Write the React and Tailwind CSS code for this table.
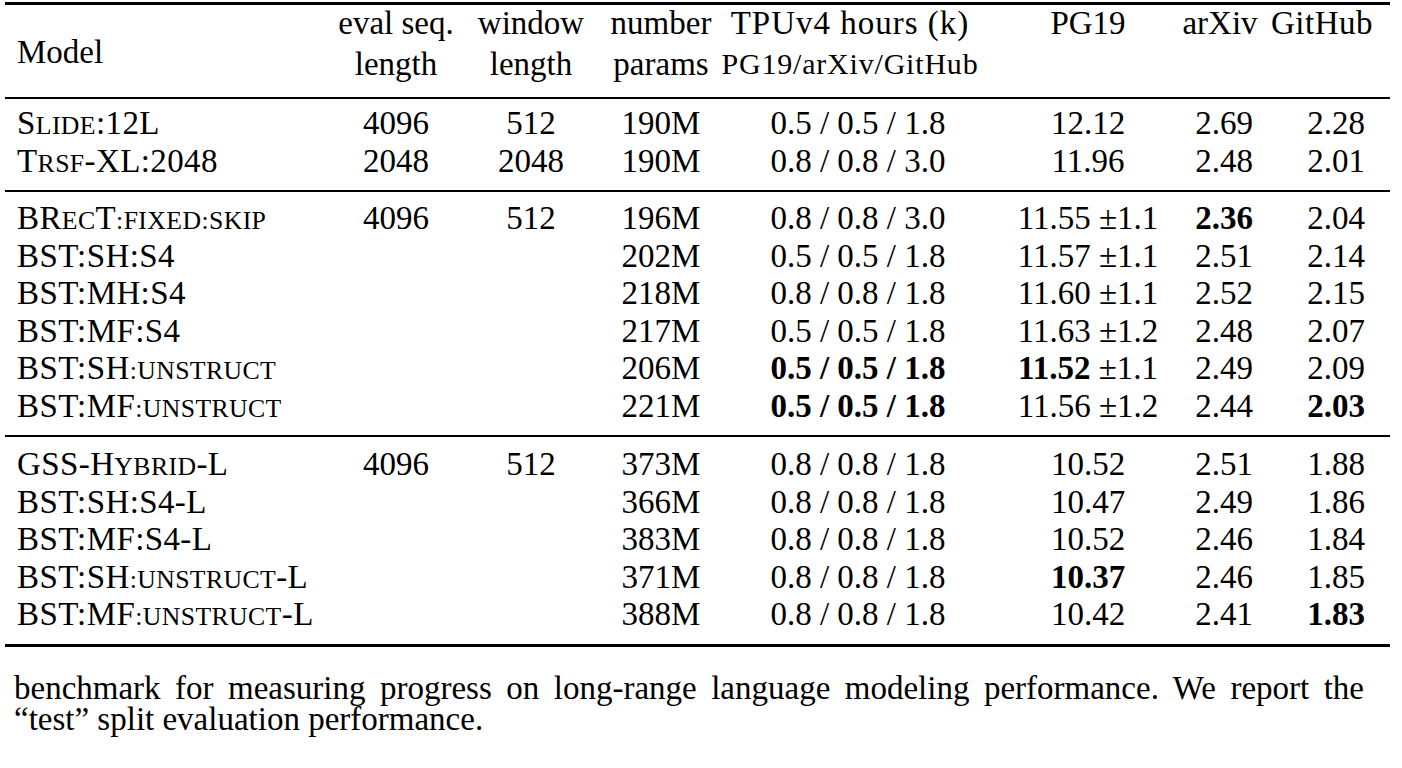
const cols = [
  "w-[132px]", // eval seq. length
  "w-[138px]", // window length
  "w-[122px]", // number params
  "w-[272px]", // TPUv4 hours
  "w-[188px]", // PG19
  "w-[84px]", // arXiv
  "w-[140px]", // GitHub
];

function Sc({ children }) {
  return <span className="text-[0.78em] uppercase">{children}</span>;
}

function B({ children }) {
  return <span className="font-bold">{children}</span>;
}

const tpuBold = <B>0.5 / 0.5 / 1.8</B>;

const groups = [
  {
    pt: "pt-[6px]",
    rows: [
      [<>S<Sc>lide</Sc>:12L</>, "4096", "512", "190M", "0.5 / 0.5 / 1.8", "12.12", "2.69", "2.28"],
      [<>T<Sc>rsf</Sc>-XL:2048</>, "2048", "2048", "190M", "0.8 / 0.8 / 3.0", "11.96", "2.48", "2.01"],
    ],
  },
  {
    pt: "pt-[8px]",
    rows: [
      [<>BR<Sc>ec</Sc>T<Sc>:fixed:skip</Sc></>, "4096", "512", "196M", "0.8 / 0.8 / 3.0", "11.55 ±1.1", <B>2.36</B>, "2.04"],
      ["BST:SH:S4", "", "", "202M", "0.5 / 0.5 / 1.8", "11.57 ±1.1", "2.51", "2.14"],
      ["BST:MH:S4", "", "", "218M", "0.8 / 0.8 / 1.8", "11.60 ±1.1", "2.52", "2.15"],
      ["BST:MF:S4", "", "", "217M", "0.5 / 0.5 / 1.8", "11.63 ±1.2", "2.48", "2.07"],
      [<>BST:SH<Sc>:unstruct</Sc></>, "", "", "206M", tpuBold, <><B>11.52</B>&nbsp;±1.1</>, "2.49", "2.09"],
      [<>BST:MF<Sc>:unstruct</Sc></>, "", "", "221M", tpuBold, "11.56 ±1.2", "2.44", <B>2.03</B>],
    ],
  },
  {
    pt: "pt-[9px]",
    rows: [
      [<>GSS-H<Sc>ybrid</Sc>-L</>, "4096", "512", "373M", "0.8 / 0.8 / 1.8", "10.52", "2.51", "1.88"],
      ["BST:SH:S4-L", "", "", "366M", "0.8 / 0.8 / 1.8", "10.47", "2.49", "1.86"],
      ["BST:MF:S4-L", "", "", "383M", "0.8 / 0.8 / 1.8", "10.52", "2.46", "1.84"],
      [<>BST:SH<Sc>:unstruct</Sc>-L</>, "", "", "371M", "0.8 / 0.8 / 1.8", <B>10.37</B>, "2.46", "1.85"],
      [<>BST:MF<Sc>:unstruct</Sc>-L</>, "", "", "388M", "0.8 / 0.8 / 1.8", "10.42", "2.41", <B>1.83</B>],
    ],
  },
];

function Row({ cells }) {
  return (
    <div className="flex h-[37.5px] leading-[37.5px]">
      <div className="w-[325px] shrink-0 pl-[12px] whitespace-nowrap tracking-[0.4px]">{cells[0]}</div>
      {cells.slice(1).map((c, i) => (
        <div key={i} className={`${cols[i]} shrink-0 flex justify-center whitespace-nowrap`}>
          {c}
        </div>
      ))}
    </div>
  );
}

export default function App() {
  return (
    <div className="w-[1402px] h-[768px] bg-white text-black overflow-hidden pt-[2px] font-['Liberation_Serif','Times_New_Roman',serif]">
      <div className="ml-[5px] w-[1385px] text-[33px]">
        <div className="border-t-[3px] border-black" />

        {/* header */}
        <div className="flex h-[92px] leading-[36px]">
          <div className="w-[325px] shrink-0 pl-[12px] pt-[29px]">Model</div>
          <div className={`${cols[0]} shrink-0 flex flex-col items-center whitespace-nowrap`}>
            <span>eval seq.</span>
            <span className="mt-[5px]">length</span>
          </div>
          <div className={`${cols[1]} shrink-0 flex flex-col items-center`}>
            <span>window</span>
            <span className="mt-[5px]">length</span>
          </div>
          <div className={`${cols[2]} shrink-0 flex flex-col items-center whitespace-nowrap`}>
            <span>number</span>
            <span className="mt-[5px]">params</span>
          </div>
          <div className={`${cols[3]} shrink-0 flex flex-col items-center whitespace-nowrap pr-[16px]`}>
            <span className="tracking-[1px]">TPUv4 hours (k)</span>
            <span className="mt-[5px] text-[30px] tracking-[0.8px]">PG19/arXiv/GitHub</span>
          </div>
          <div className={`${cols[4]} shrink-0 flex justify-center`}>PG19</div>
          <div className={`${cols[5]} shrink-0 flex justify-center pr-[8px]`}>arXiv</div>
          <div className={`${cols[6]} shrink-0 flex justify-center pr-[28px] tracking-[0.5px]`}>GitHub</div>
        </div>

        {groups.map((g, gi) => (
          <div key={gi}>
            <div className="border-t-2 border-black" />
            <div className={`${g.pt} pb-[10px]`}>
              {g.rows.map((r, ri) => (
                <Row key={ri} cells={r} />
              ))}
            </div>
          </div>
        ))}
        <div className="border-t-[3px] border-black" />
      </div>

      {/* caption text under the table */}
      <div className="mt-[26px] pl-[14px] w-[1364px] text-[33px] leading-[31px]">
        <div className="text-justify [text-align-last:justify] whitespace-nowrap">
          benchmark for measuring progress on long-range language modeling performance. We report the
        </div>
        <div>“test” split evaluation performance.</div>
      </div>
    </div>
  );
}
